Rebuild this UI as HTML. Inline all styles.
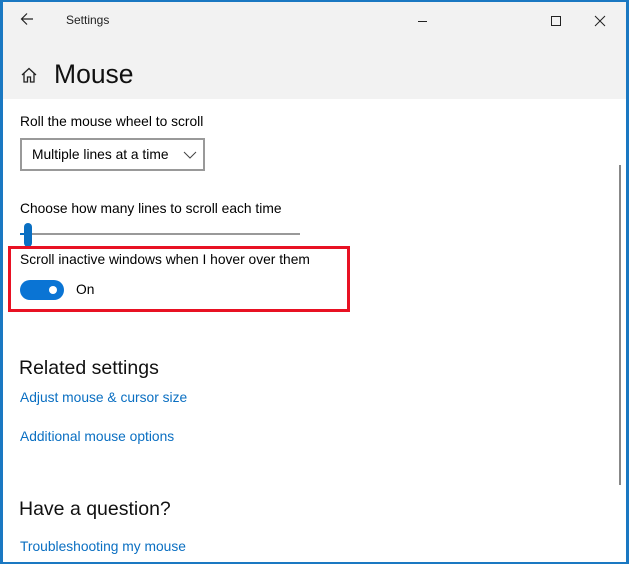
<!DOCTYPE html>
<html><head><meta charset="utf-8"><style>
*{margin:0;padding:0;box-sizing:border-box}
body{width:629px;height:564px;overflow:hidden;background:#1a78c2;font-family:"Liberation Sans",sans-serif;position:relative}
.win{position:absolute;left:3px;top:2px;width:623px;height:560px;background:#fff;overflow:hidden}
.hdr{position:absolute;left:0;top:0;width:623px;height:97px;background:#f2f2f2}
.t{position:absolute;white-space:nowrap;color:#000}
.link{color:#0a6fc2;font-size:13.8px}
</style></head><body>
<div class="win">
<div class="hdr"></div>
<svg style="position:absolute;left:17px;top:10px" width="14" height="14" viewBox="0 0 14 14"><path d="M13 7H1.5M7 1.5L1.5 7 7 12.5" stroke="#222" stroke-width="1.2" fill="none"/></svg>
<div class="t" style="left:63px;top:11px;font-size:12px;color:#222">Settings</div>
<svg style="position:absolute;left:414px;top:12px" width="200" height="14" viewBox="0 0 200 14"><path d="M1 7.5H10" stroke="#222" stroke-width="1"/><path d="M134.5 2.5h9v9h-9z" stroke="#222" stroke-width="1" fill="none"/><path d="M178 2l10 10M188 2l-10 10" stroke="#222" stroke-width="1"/></svg>
<svg style="position:absolute;left:17px;top:64px" width="18" height="18" viewBox="0 0 18 18"><path d="M2 9L9 2.5 16 9M4 7.5V16h3.5v-5h3v5H14V7.5" stroke="#222" stroke-width="1.3" fill="none"/></svg>
<div class="t" style="left:51px;top:57px;font-size:26.5px;color:#111">Mouse</div>
<div class="t" style="left:17px;top:112px;font-size:13.8px">Roll the mouse wheel to scroll</div>
<div style="position:absolute;left:17px;top:136px;width:185px;height:33px;border:2px solid #999"></div>
<div class="t" style="left:29px;top:145px;font-size:13.8px">Multiple lines at a time</div>
<svg style="position:absolute;left:180px;top:148px" width="14" height="10"><path d="M1 2l6 6 6-6" stroke="#444" stroke-width="1" fill="none"/></svg>
<div class="t" style="left:17px;top:199px;font-size:13.8px">Choose how many lines to scroll each time</div>
<div style="position:absolute;left:17px;top:231px;width:280px;height:2px;background:#999"></div>
<div style="position:absolute;left:17px;top:231px;width:8px;height:2px;background:#0a6fc2"></div>
<div style="position:absolute;left:21px;top:221px;width:8px;height:24px;background:#0a6fc2;border-radius:4px"></div>
<div style="position:absolute;left:5px;top:244px;width:342px;height:66px;border:3px solid #e81123"></div>
<div class="t" style="left:17px;top:250px;font-size:13.8px">Scroll inactive windows when I hover over them</div>
<div style="position:absolute;left:17px;top:278px;width:44px;height:20px;background:#0a74d4;border-radius:10px"></div>
<div style="position:absolute;left:46px;top:284px;width:8px;height:8px;background:#fff;border-radius:50%"></div>
<div class="t" style="left:73px;top:280px;font-size:13.8px">On</div>
<div class="t" style="left:16px;top:355px;font-size:19.5px;color:#111">Related settings</div>
<div class="t link" style="left:17px;top:388px">Adjust mouse &amp; cursor size</div>
<div class="t link" style="left:17px;top:427px">Additional mouse options</div>
<div class="t" style="left:16px;top:496px;font-size:19.5px;color:#111">Have a question?</div>
<div class="t link" style="left:17px;top:537px">Troubleshooting my mouse</div>
<div style="position:absolute;left:616px;top:163px;width:2px;height:320px;background:#888"></div>
</div>
</body></html>
